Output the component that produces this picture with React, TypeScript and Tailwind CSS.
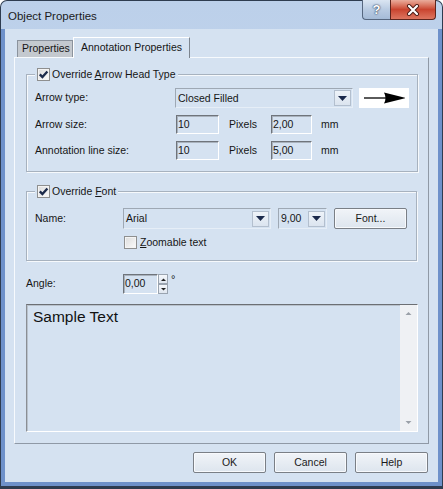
import type { ReactNode } from 'react';

const page = 'bg-[#d5e2f1]';

function Check({ on }: { on?: boolean }) {
  return (
    <span className="flex h-[13px] w-[13px] shrink-0 items-center justify-center border border-[#8e8f8f] bg-gradient-to-br from-[#dcdcdc] to-[#fbfbfb] shadow-[inset_0_0_0_1px_#f4f4f4]">
      {on && (
        <svg width="11" height="11" viewBox="0 0 11 11">
          <path d="M1.8 5.4 L4.4 8.1 L9.4 2.4" fill="none" stroke="#1c2b4b" strokeWidth="2.3" />
        </svg>
      )}
    </span>
  );
}

function DropArrow() {
  return (
    <span className="mr-px flex h-[16px] w-[17px] shrink-0 items-center justify-center border border-[#b3bfce] bg-gradient-to-b from-[#eef3f9] to-[#dbe4ef]">
      <svg width="9" height="5" viewBox="0 0 9 5">
        <polygon points="0,0 9,0 4.5,5" fill="#1b2a4c" />
      </svg>
    </span>
  );
}

function Combo({ value, w }: { value: string; w: string }) {
  return (
    <div className={`flex h-full items-center border border-[#9ea8b4] border-b-[#e6eef7] border-r-[#e6eef7] ${page} ${w}`}>
      <span className="flex-1 pl-[2px] leading-[17px]">{value}</span>
      <DropArrow />
    </div>
  );
}

function Field({ value, w }: { value: string; w: string }) {
  return (
    <div
      className={`h-full border border-t-[#6f747b] border-l-[#6f747b] border-b-white border-r-white pl-[1px] leading-[17px] shadow-[inset_1px_1px_0_#a9b2bd] ${page} ${w}`}
    >
      {value}
    </div>
  );
}

function Btn({ children, w = 'w-[73px]' }: { children: ReactNode; w?: string }) {
  return (
    <button className={`flex h-[21px] items-center justify-center rounded-[2px] border border-[#7a7f86] bg-gradient-to-b from-[#f1f4f8] to-[#dde5ee] text-[10.5px] text-[#1a1a1a] shadow-[inset_0_0_0_1px_#f7f9fc] ${w}`}>
      {children}
    </button>
  );
}

function Group({ legend, children, w, className = '' }: { legend: ReactNode; children: ReactNode; w: string; className?: string }) {
  return (
    <fieldset
      className={`border border-[#a7b2bf] shadow-[inset_1px_1px_0_#f6f9fc,1px_1px_0_#f6f9fc] ${w} ${className}`}
    >
      <legend className={`ml-[8px] flex h-[14px] items-center gap-[2px] px-[2px] ${page}`}>{legend}</legend>
      {children}
    </fieldset>
  );
}

export default function App() {
  return (
    <div className="h-[489px] w-[443px] rounded-t-[7px] bg-[#2e3c50] p-px pb-[3px] font-['Liberation_Sans',Arial,sans-serif] text-[10.5px] text-[#161616]">
      <div className="flex h-full flex-col rounded-t-[6px] bg-gradient-to-b from-[#bcd0ea] to-[#cddcf0]">
        {/* Title bar */}
        <div className="flex h-[28px] shrink-0">
          <span className="pl-[7px] pt-[8px] text-[11.5px] leading-[14px] text-[#1b1b1b]">Object Properties</span>
          <div className="ml-auto mr-[6px] -mt-px flex h-[20px]">
            <div className="flex w-[28px] items-center justify-center rounded-bl-[4px] border border-t-0 border-r-0 border-[#56677f] bg-gradient-to-b from-[#dae5f2] via-[#b9cbe2] to-[#a5bbd7] text-[13px] font-bold text-white [text-shadow:0_0_2px_#24344f,0_0_1px_#24344f]">
              ?
            </div>
            <div className="flex w-[46px] items-center justify-center rounded-br-[4px] border border-t-0 border-[#5e251d] bg-gradient-to-b from-[#e9ac9c] via-[#c9442f] to-[#dd7560]">
              <svg width="14" height="12" viewBox="0 0 14 12">
                <path d="M3 2 L11 10 M11 2 L3 10" stroke="#4a1a14" strokeWidth="4" strokeLinecap="round" />
                <path d="M3 2 L11 10 M11 2 L3 10" stroke="#fff" strokeWidth="2.2" strokeLinecap="round" />
              </svg>
            </div>
          </div>
        </div>

        {/* Client */}
        <div className={`flex flex-1 flex-col border-x-[4px] border-b-[4px] border-[#6e91ca] pl-[9px] pr-[9px] pt-[8px] ${page}`}>
          {/* Tabs */}
          <div className="flex h-[20px] items-end">
            <div className="ml-[3px] flex h-[17px] w-[56px] items-center border border-b-0 border-[#8b939d] bg-[#c4c9cf] pl-[4px] text-[10.5px]">
              Properties
            </div>
            <div className={`relative z-10 -mb-px flex h-[21px] w-[117px] items-center border border-b-0 border-l-white border-t-white border-r-[#7d858f] pl-[7px] text-[10.5px] ${page}`}>
              Annotation Properties
            </div>
          </div>

          {/* Tab page */}
          <div className="flex h-[387px] flex-col border border-l-[#f7fafd] border-t-[#f7fafd] border-b-[#8f99a6] border-r-[#8f99a6] pl-[11px] pr-[10px] pt-[9px]">
            <Group
              w="w-[392px]"
              legend={
                <>
                  <Check on />
                  <span className="leading-[14px]">
                    Override <span className="underline underline-offset-[1px]">A</span>rrow Head Type
                  </span>
                </>
              }
            >
              <div className="pb-[11px] pl-[8px] pt-[7px]">
                <div className="flex h-[20px] items-center">
                  <span className="w-[140px]">Arrow type:</span>
                  <Combo value="Closed Filled" w="w-[178px]" />
                  <div className="ml-[6px] flex h-[20px] w-[50px] items-center justify-center bg-white">
                    <svg width="44" height="14" viewBox="0 0 44 14">
                      <line x1="2" y1="7" x2="26" y2="7" stroke="#000" strokeWidth="1.3" />
                      <path d="M22 1.5 Q25 7 22 12.5 L43 7.3 L43 6.7 Z" fill="#000" />
                    </svg>
                  </div>
                </div>
                <div className="mt-[7px] flex h-[19px] items-center">
                  <span className="w-[141px]">Arrow size:</span>
                  <Field value="10" w="w-[43px]" />
                  <span className="ml-[10px] w-[42px]">Pixels</span>
                  <Field value="2,00" w="w-[41px]" />
                  <span className="ml-[9px]">mm</span>
                </div>
                <div className="mt-[7px] flex h-[19px] items-center">
                  <span className="w-[141px]">Annotation line size:</span>
                  <Field value="10" w="w-[43px]" />
                  <span className="ml-[10px] w-[42px]">Pixels</span>
                  <Field value="5,00" w="w-[41px]" />
                  <span className="ml-[9px]">mm</span>
                </div>
              </div>
            </Group>

            <Group
              w="w-[391px]"
              className="mt-[12px]"
              legend={
                <>
                  <Check on />
                  <span className="leading-[14px]">
                    Override <span className="underline underline-offset-[1px]">F</span>ont
                  </span>
                </>
              }
            >
              <div className="pb-[11px] pl-[8px] pt-[10px]">
                <div className="flex h-[21px] items-center">
                  <span className="w-[88px]">Name:</span>
                  <Combo value="Arial" w="w-[148px]" />
                  <div className="ml-[7px] h-full">
                    <Combo value="9,00" w="w-[49px]" />
                  </div>
                  <div className="ml-[7px]">
                    <Btn>Font...</Btn>
                  </div>
                </div>
                <div className="mt-[7px] flex h-[13px] items-center pl-[89px]">
                  <Check />
                  <span className="ml-[3px]">
                    <span className="underline underline-offset-[1px]">Z</span>oomable text
                  </span>
                </div>
              </div>
            </Group>

            {/* Angle */}
            <div className="mt-[13px] flex h-[20px] items-center">
              <span className="w-[97px]">Angle:</span>
              <Field value="0,00" w="w-[35px]" />
              <div className="flex h-full w-[10px] flex-col">
                {['M1 4 L3.5 1.5 L6 4 Z', 'M1 1 L3.5 3.5 L6 1 Z'].map((d) => (
                  <span key={d} className="flex h-[10px] items-center justify-center border border-[#9aa4b0] bg-gradient-to-b from-[#f4f7fb] to-[#e0e7f0]">
                    <svg width="7" height="5" viewBox="0 0 7 5">
                      <path d={d} fill="#222" />
                    </svg>
                  </span>
                ))}
              </div>
              <span className="ml-[3px] self-start text-[11px] leading-[10px]">°</span>
            </div>

            {/* Sample text */}
            <div className="mt-[10px] flex h-[128px] w-[392px] border border-t-[#6c6f74] border-l-[#8a8e94] border-b-white border-r-white shadow-[inset_1px_1px_0_#b9c2cc]">
              <div className="flex-1 pl-[6px] pt-[3px] text-[15.5px] leading-[18px] text-[#111]">Sample Text</div>
              <div className="flex w-[17px] flex-col justify-between bg-[#eff1f4] py-[6px]">
                <svg width="17" height="5" viewBox="0 0 17 5">
                  <path d="M5.5 4 L8.5 1 L11.5 4 Z" fill="#9aa0a8" />
                </svg>
                <svg width="17" height="5" viewBox="0 0 17 5">
                  <path d="M5.5 1 L8.5 4 L11.5 1 Z" fill="#9aa0a8" />
                </svg>
              </div>
            </div>
          </div>

          {/* Buttons */}
          <div className="mr-px mt-[8px] flex justify-end gap-[8px]">
            <Btn>OK</Btn>
            <Btn>Cancel</Btn>
            <Btn>Help</Btn>
          </div>
        </div>
      </div>
    </div>
  );
}
